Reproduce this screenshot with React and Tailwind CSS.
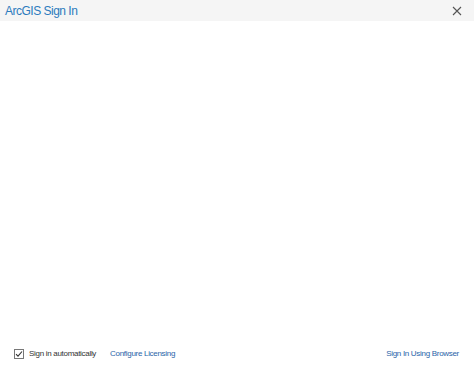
import React, { useState } from 'react';

export default function App() {
  const [auto, setAuto] = useState(true);

  return (
    <div className="w-[474px] h-[372px] bg-white flex flex-col font-['Liberation_Sans',Arial,sans-serif] overflow-hidden">
      {/* title bar */}
      <div className="h-[21px] bg-[#f5f5f5] flex items-center justify-between pl-[5px] pr-[12px]">
        <span className="text-[12px] text-[#2c7bbd] tracking-[-0.5px]">ArcGIS Sign In</span>
        <svg width="10" height="10" viewBox="0 0 10 10" className="mt-[1px]">
          <path d="M1 1 L9 9 M9 1 L1 9" stroke="#555" strokeWidth="1.1" />
        </svg>
      </div>

      {/* web content area */}
      <div className="flex-1" />

      {/* footer */}
      <div className="h-[27px] mb-[5px] flex items-center pl-[14px] pr-[15px] text-[8px] tracking-[-0.3px]">
        <label className="flex items-center gap-[5px] text-[#333]">
          <span
            onClick={() => setAuto(!auto)}
            className="w-[10px] h-[10px] border border-[#777] bg-white flex items-center justify-center"
          >
            {auto && (
              <svg width="8" height="8" viewBox="0 0 8 8">
                <path d="M1 4.2 L3 6.2 L7 1.5" stroke="#333" strokeWidth="1.1" fill="none" />
              </svg>
            )}
          </span>
          Sign in automatically
        </label>
        <a href="#" className="ml-[14px] text-[#2a64a8]">Configure Licensing</a>
        <a href="#" className="ml-auto text-[#2a64a8]">Sign In Using Browser</a>
      </div>
    </div>
  );
}
